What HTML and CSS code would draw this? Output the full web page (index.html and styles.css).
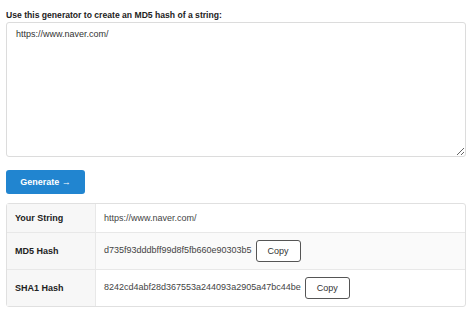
FILE: index.html
```html
<!DOCTYPE html>
<html>
<head>
<meta charset="utf-8">
<link rel="stylesheet" href="styles.css">
</head>
<body>
<div class="page">
  <label class="lead" for="src">Use this generator to create an MD5 hash of a string:</label>
  <textarea id="src" class="input">https://www.naver.com/</textarea>
  <button class="generate">Generate →</button>
  <table class="result">
    <tr>
      <td class="key">Your String</td>
      <td class="val">https://www.naver.com/</td>
    </tr>
    <tr class="striped">
      <td class="key">MD5 Hash</td>
      <td class="val">d735f93dddbff99d8f5fb660e90303b5<button class="copy">Copy</button></td>
    </tr>
    <tr>
      <td class="key">SHA1 Hash</td>
      <td class="val">8242cd4abf28d367553a244093a2905a47bc44be<button class="copy">Copy</button></td>
    </tr>
  </table>
</div>
</body>
</html>
```
FILE: styles.css
```css
html, body {
  margin: 0;
  padding: 0;
  background: #fff;
}
body {
  font-family: "Liberation Sans", Arial, sans-serif;
  font-size: 9px;
  color: #333;
}
.page {
  width: 460px;
  padding: 6px 8px 0 6px;
  display: flex;
  flex-direction: column;
  align-items: flex-start;
}
.lead {
  display: block;
  font-weight: bold;
  font-size: 8.6px;
  color: #222;
  line-height: 12px;
  margin: 3px 0 1px 0;
}
.input {
  box-sizing: border-box;
  width: 460px;
  height: 135px;
  border: 1px solid #dcdcdc;
  border-radius: 3px;
  padding: 4px 9px;
  font-family: "Liberation Sans", Arial, sans-serif;
  font-size: 9px;
  line-height: 14px;
  color: #333;
  resize: vertical;
  margin: 0;
  outline: none;
}
.generate {
  margin-top: 13px;
  width: 79px;
  height: 24px;
  border: none;
  border-radius: 3px;
  background: #2185d0;
  color: #fff;
  font-family: "Liberation Sans", Arial, sans-serif;
  font-size: 9px;
  font-weight: bold;
  padding: 0;
  cursor: pointer;
}
.result {
  margin-top: 9px;
  width: 460px;
  border-collapse: separate;
  border-spacing: 0;
  border: 1px solid #e0e0e0;
  border-radius: 3px;
  font-size: 9px;
}
.result td {
  padding: 0 8px;
  border-top: 1px solid #e8e8e8;
  color: #444;
  white-space: nowrap;
}
.result tr:first-child td {
  border-top: none;
  height: 28px;
}
.result tr:nth-child(2) td {
  height: 36px;
}
.result tr:nth-child(3) td {
  height: 36px;
}
.result .key {
  width: 72px;
  font-weight: bold;
  color: #222;
  background: #f7f7f7;
  border-right: 1px solid #e8e8e8;
}
.result tr.striped .val {
  background: #fafafa;
}
.copy {
  margin-left: 4px;
  width: 45px;
  height: 22px;
  border: 1px solid #555;
  border-radius: 3px;
  background: #fff;
  color: #333;
  font-family: "Liberation Sans", Arial, sans-serif;
  font-size: 9px;
  padding: 0;
  vertical-align: middle;
}
```
